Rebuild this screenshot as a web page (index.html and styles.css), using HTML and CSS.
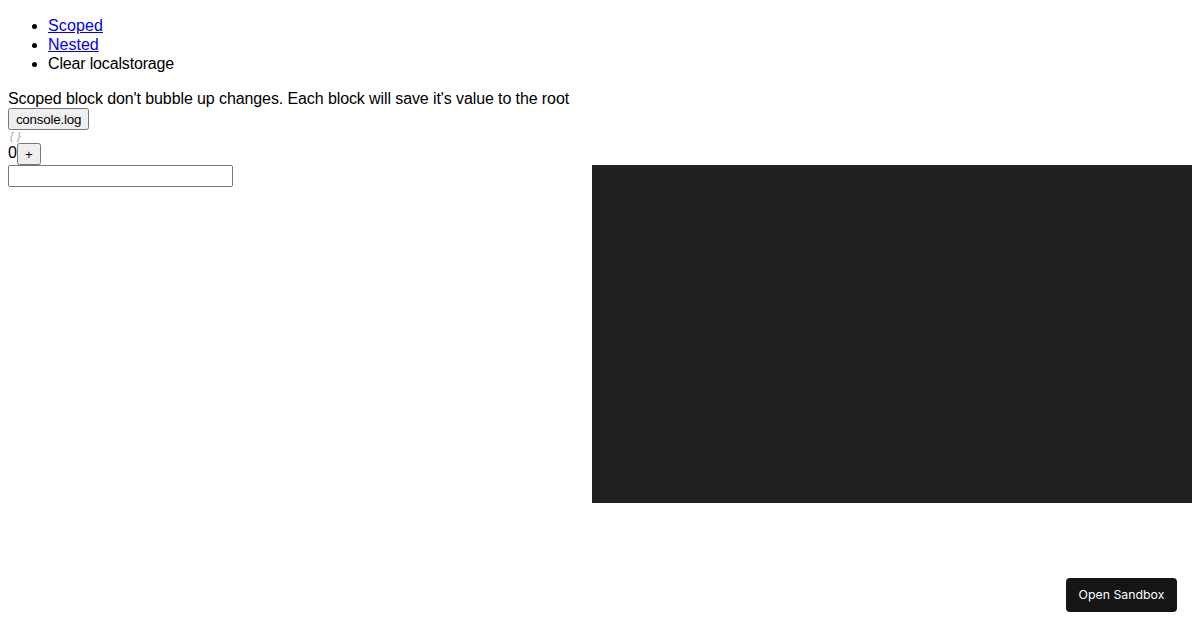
FILE: index.html
```html
<!DOCTYPE html>
<html lang="en">
<head>
<title>Scoped</title>
<meta charset="utf-8">
<link rel="stylesheet" href="styles.css">
</head>
<body>

<div class="page">
  <div class="demo">
    <ul>
      <li><a class="scoped" href="#scoped">Scoped</a></li>
      <li><a href="#nested">Nested</a></li>
      <li class="clear">Clear localstorage</li>
    </ul>
    <div class="note">Scoped block don't bubble up changes. Each block will save it's value to the root</div>
    <button type="button" class="log">console.log</button>
    <div class="json">{ }</div>
    <div class="counter">0<button type="button">+</button></div>
    <input type="text">
  </div>
  <div class="preview"></div>
</div>

<a class="sandbox" href="#open">Open Sandbox</a>

</body>
</html>
```

FILE: styles.css
```css
* {
  box-sizing: border-box;
}

body {
  margin: 8px;
  font-family: "Liberation Sans", Arial, sans-serif;
  font-size: 16px;
  color: #000;
  background-color: #fff;
  text-rendering: optimizeSpeed;
}

.page {
  display: flex;
}

.demo {
  width: 584px;
  flex: none;
}

.demo ul {
  margin: 8px 0 17px;
  padding-left: 40px;
  line-height: 19px;
}

.scoped {
  letter-spacing: 0.12px;
}

.clear {
  letter-spacing: -0.16px;
}

.note {
  height: 18px;
  letter-spacing: -0.1px;
}

.demo button {
  height: 22px;
  font-family: "Liberation Sans", Arial, sans-serif;
  font-size: 13.33px;
  text-rendering: optimizeSpeed;
}

.log {
  width: 81px;
  padding: 1px 0;
  letter-spacing: -0.2px;
}

.counter {
  height: 22px;
}

.counter button {
  vertical-align: -1px;
}

.demo input {
  display: block;
  width: 225px;
  height: 22px;
}

.json {
  height: 13px;
  padding-left: 2px;
  font-size: 10px;
  line-height: 13px;
  letter-spacing: 0.6px;
  font-style: italic;
  color: #7f9f9f;
}

.preview {
  width: 600px;
  height: 338px;
  margin-top: 157px;
  flex: none;
  background-color: #212121;
}

/* Stays in the corner over the page */
.sandbox {
  position: fixed;
  right: 23px;
  bottom: 18px;
  width: 111px;
  height: 34px;
  border-radius: 4px;
  background-color: #151515;
  color: #fff;
  font-family: Inter, sans-serif;
  font-size: 12.3px;
  line-height: 33px;
  text-align: center;
  text-decoration: none;
}
```
